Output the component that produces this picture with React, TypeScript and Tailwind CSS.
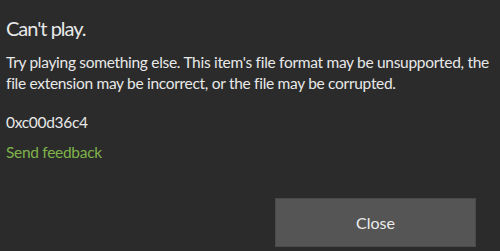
import React from 'react';

const App: React.FC = () => {
  return (
    <div
      className="w-[500px] h-[251px] bg-[#2b2b2b] text-[#e8e8e8] flex flex-col overflow-hidden"
      style={{ fontFamily: 'Lato, "Open Sans", sans-serif' }}
    >
      <div className="pl-[6px] pr-[2px] pt-[14px] flex-1">
        <h1 className="text-[20px] leading-[28px] tracking-[-1px]">Can't play.</h1>
        <p className="mt-[10px] text-[15.5px] leading-[21px] tracking-[-0.3px]">
          Try playing something else. This item's file format may be unsupported, the file extension may be incorrect, or
          the file may be corrupted.
        </p>
        <p className="mt-[18px] text-[15.5px] leading-[21px] tracking-[-0.3px]">0xc00d36c4</p>
        <button className="mt-[9px] text-[15.5px] leading-[21px] tracking-[-0.3px] text-[#7fb34a]">Send feedback</button>
      </div>
      <div className="flex justify-end pr-[24px] pb-[4px]">
        <button className="w-[201px] h-[49px] bg-[#555555] border border-[#4a4a4a] text-[16px] text-[#ececec]">
          Close
        </button>
      </div>
    </div>
  );
};

export default App;
